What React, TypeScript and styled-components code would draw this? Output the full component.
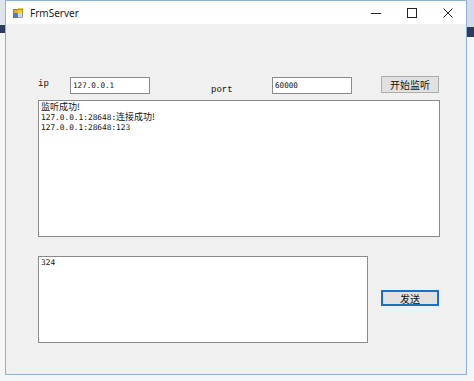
import React from 'react';
import styled, { createGlobalStyle } from 'styled-components';

const GlobalStyle = createGlobalStyle`
  html, body {
    margin: 0;
    padding: 0;
    width: 474px;
    height: 381px;
    overflow: hidden;
    background: #eef1f5;
  }
`;

const Desktop = styled.div`
  width: 474px;
  height: 381px;
  display: flex;
  align-items: flex-start;
  padding-left: 5px;
  box-sizing: border-box;
  background:
    linear-gradient(#dfe4ec, #dfe4ec) 0 0 / 5px 25px no-repeat,
    linear-gradient(#2c3c5a, #2c3c5a) 0 25px / 5px 8px no-repeat,
    linear-gradient(#2c3c5a, #2c3c5a) 467px 27px / 7px 10px no-repeat,
    linear-gradient(#d5dbe6, #d5dbe6) 467px 0 / 7px 27px no-repeat,
    #f4f6f8;
`;

const Window = styled.div`
  width: 462px;
  height: 375px;
  border: 1px solid #8db2dc;
  box-sizing: border-box;
  background: #f0f0f0;
  display: flex;
  flex-direction: column;
`;

const TitleBar = styled.div`
  height: 23px;
  background: #ffffff;
  display: flex;
  align-items: center;
  padding-left: 7px;
  font-family: 'Noto Sans', 'Open Sans', sans-serif;
  font-size: 10px;
  color: #1a1a1a;
`;

const TitleText = styled.span`
  margin-left: 7px;
  flex: 1;
`;

const CaptionButton = styled.div`
  width: 36px;
  height: 23px;
  display: flex;
  align-items: center;
  justify-content: center;
`;

const Client = styled.div`
  flex: 1;
  padding: 52px 0 0 32px;
  display: flex;
  flex-direction: column;
  color: #000;
`;

const TopRow = styled.div`
  display: flex;
  align-items: flex-start;
  height: 18px;
`;

const Label = styled.span<{ $w: number; $ml?: number; $mt: number }>`
  width: ${(p) => p.$w}px;
  margin-left: ${(p) => p.$ml ?? 0}px;
  margin-top: ${(p) => p.$mt}px;
  font-family: 'Liberation Mono', monospace;
  font-size: 9px;
  color: #111;
`;

const TextBox = styled.div`
  width: 80px;
  height: 17px;
  margin-top: 1px;
  box-sizing: border-box;
  border: 1px solid #8a8a8a;
  background: #fff;
  padding: 2px 0 0 2px;
  font-family: 'DejaVu Sans Mono', monospace;
  font-size: 7.6px;
  line-height: 11px;
  color: #111;
`;

const Button = styled.div<{ $focused?: boolean; $w: number; $h: number }>`
  width: ${(p) => p.$w}px;
  height: ${(p) => p.$h}px;
  box-sizing: border-box;
  background: #e1e1e1;
  border: ${(p) => (p.$focused ? '2px solid #1a6fc0' : '1px solid #adadad')};
  display: flex;
  align-items: center;
  justify-content: center;
  font-family: 'Noto Sans CJK SC', sans-serif;
  font-size: 10px;
  color: #111;
`;

const LogBox = styled.div<{ $w: number; $h: number }>`
  width: ${(p) => p.$w}px;
  height: ${(p) => p.$h}px;
  box-sizing: border-box;
  border: 1px solid #8a8a8a;
  background: #fff;
  padding: 1px 2px;
  font-family: 'DejaVu Sans Mono', 'Noto Sans CJK SC', monospace;
  font-size: 7.8px;
  line-height: 10px;
  white-space: pre;
  color: #111;
`;

const CnLine = styled.div`
  font-family: 'Noto Sans CJK SC', sans-serif;
  font-size: 9px;
  line-height: 10px;
`;

const Mixed = styled.span`
  font-family: 'Noto Sans CJK SC', sans-serif;
  font-size: 9px;
`;

const BottomRow = styled.div`
  display: flex;
  align-items: flex-start;
  margin-top: 19px;
  gap: 13px;
`;

const SendWrap = styled.div`
  margin-top: 34px;
`;

function AppIcon() {
  return (
    <svg width='10' height='10' viewBox='0 0 10 10'>
      <rect x='0' y='1' width='5' height='4' fill='#e8a33a' />
      <rect x='5' y='0' width='5' height='5' fill='#f2c84b' />
      <rect x='0' y='5' width='5' height='5' fill='#4a7fc9' />
      <rect x='5' y='5' width='5' height='4' fill='#c9d7ea' />
      <rect x='0.5' y='1.5' width='9' height='8' fill='none' stroke='#7a6a4a' strokeWidth='0.6' />
    </svg>
  );
}

export default function App() {
  return (
    <>
      <GlobalStyle />
      <Desktop>
        <Window>
          <TitleBar>
            <AppIcon />
            <TitleText>FrmServer</TitleText>
            <CaptionButton>
              <svg width='10' height='10' viewBox='0 0 10 10'>
                <line x1='0' y1='5.5' x2='10' y2='5.5' stroke='#222' strokeWidth='1' />
              </svg>
            </CaptionButton>
            <CaptionButton>
              <svg width='10' height='10' viewBox='0 0 10 10'>
                <rect x='0.5' y='0.5' width='9' height='9' fill='none' stroke='#222' strokeWidth='1' />
              </svg>
            </CaptionButton>
            <CaptionButton>
              <svg width='10' height='10' viewBox='0 0 10 10'>
                <path d='M0.5 0.5 L9.5 9.5 M9.5 0.5 L0.5 9.5' stroke='#222' strokeWidth='1' />
              </svg>
            </CaptionButton>
          </TitleBar>
          <Client>
            <TopRow>
              <Label $w={32} $mt={3}>ip</Label>
              <TextBox>127.0.0.1</TextBox>
              <Label $w={61} $ml={61} $mt={9}>port</Label>
              <TextBox>60000</TextBox>
              <div style={{ marginLeft: 29 }}>
                <Button $w={58} $h={17}>开始监听</Button>
              </div>
            </TopRow>
            <div style={{ marginTop: 6 }}>
              <LogBox $w={402} $h={137}>
                <CnLine>监听成功!</CnLine>
                <div>
                  127.0.0.1:28648:<Mixed>连接成功!</Mixed>
                </div>
                <div>127.0.0.1:28648:123</div>
              </LogBox>
            </div>
            <BottomRow>
              <LogBox $w={330} $h={87}>
                <div>324</div>
              </LogBox>
              <SendWrap>
                <Button $focused $w={58} $h={16}>发送</Button>
              </SendWrap>
            </BottomRow>
          </Client>
        </Window>
      </Desktop>
    </>
  );
}
